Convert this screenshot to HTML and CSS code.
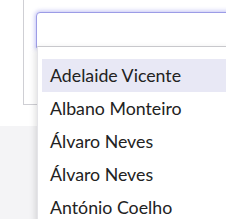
FILE: index.html
```html
<!DOCTYPE html>
<html lang="pt">
<head>
	<meta charset="UTF-8">
	<title>Selecionar pessoa</title>
	<link rel="stylesheet" href="styles.css">
</head>
<body>
	<div id="wrap">
		<div class="top">
			<div class="panel">
				<input class="search" type="text" value="">
			</div>
		</div>
		<div class="bottom"></div>
		<ul class="menu">
			<li class="active">Adelaide Vicente</li>
			<li>Albano Monteiro</li>
			<li>Álvaro Neves</li>
			<li>Álvaro Neves</li>
			<li>António Coelho</li>
		</ul>
	</div>
</body>
</html>
```
FILE: styles.css
```css
body,ul{margin:0;padding:0;}
ul{list-style:none;}
body{
	font-family: Lato, "Open Sans", sans-serif;
	color:#222;
	background:#fff;
	overflow:hidden;
}
#wrap{
	position:relative;
	width:226px;
	height:219px;
	overflow:hidden;
}
.top{
	height:105px;
	padding-bottom:21px;
	background:#fff;
}
.panel{
	box-sizing:border-box;
	width:400px;
	height:105px;
	margin-left:23px;
	padding:12px 0 0 12px;
	border-left:1px solid #cfcfd4;
	border-bottom:1px solid #cfcfd4;
}
.search{
	display:block;
	box-sizing:border-box;
	width:400px;
	height:36px;
	margin:0;
	border:1px solid #9c9ce6;
	border-radius:4px 0 0 0;
	box-shadow:0 0 4px 1px rgba(120,120,230,.45);
	outline:none;
	background:#fff;
}
.bottom{
	height:100px;
	background:#f4f4f6;
}
.menu{
	position:absolute;
	left:37px;
	top:46px;
	width:300px;
	height:200px;
	padding:12px 0 0 4px;
	background:#fff;
	border-top:1px solid #c8c8cc;
	border-left:1px solid #e4e4e8;
	box-shadow:-2px 2px 6px rgba(0,0,0,.12);
}
.menu li{
	height:33px;
	padding-left:8px;
	line-height:33px;
	font-size:17.75px;
}
.menu li.active{
	background:#e8e8f5;
}
```
